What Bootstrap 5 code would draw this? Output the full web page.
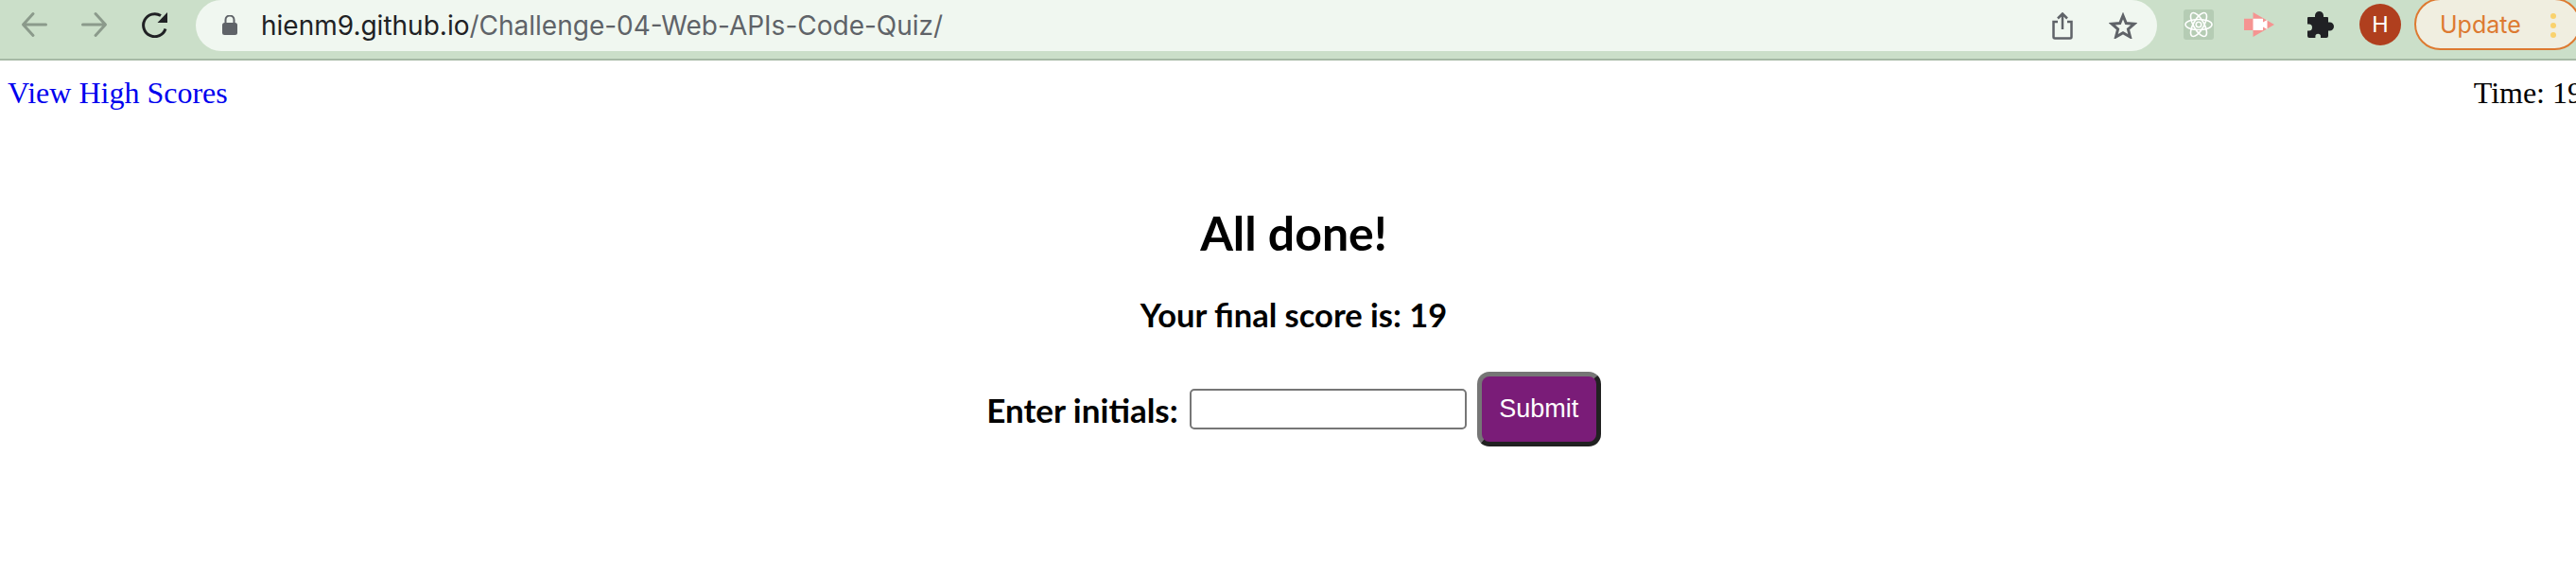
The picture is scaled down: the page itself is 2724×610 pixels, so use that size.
<!DOCTYPE html>
<html lang="en">
<head>
<meta charset="utf-8">
<title>Code Quiz</title>
<link href="https://cdn.jsdelivr.net/npm/bootstrap@5.3.0/dist/css/bootstrap.min.css" rel="stylesheet">
<style>
html,body{height:100%;overflow:hidden;background:#fff;color:#000}
.chrome-bar{height:64px;width:2724px;overflow:hidden;background:#cbdfc9;border-bottom:2px solid #a7baa6;padding-left:22px}
.chrome-bar>*{flex:none}
.nav-arrow{width:28px;height:28px;margin:12px 36px 0 0}
.nav-reload{width:30px;height:28px;margin:12px 28px 0 -1px}
.omni{width:2074px;height:54px;background:#f0f7f0;border-radius:27px;padding:0 21px 0 28px;font:28px/1 "Inter","Liberation Sans",sans-serif}
.omni-lock{margin-right:25px;margin-top:-1px}
.omni-host{color:#202124}.omni-path{color:#5f6368}
.omni-tools{margin-left:auto;gap:37px}
.ext-react{width:32px;height:32px;background:#b5ccb4;border-radius:3px;margin:10px 0 0 28px}
.ext-rec{width:32px;height:26px;margin:13px 0 0 32px}
.ext-puzzle{width:29px;height:28px;margin:12px 0 0 34px}
.avatar{width:44px;height:44px;margin:4px 0 0 27px;background:#b03f1e;color:#fff;font:24px/44px "Liberation Sans",sans-serif}
.update-pill{width:176px;height:55px;margin:-2px 0 0 14px;padding:2px 0 0 25px;background:#f0eee0;border:2px solid #dd7a31;border-radius:28px;color:#dd7a31;font:25px/1 "Inter","Liberation Sans",sans-serif;gap:31px}
.dots{gap:4px}.dots i{display:block;width:6px;height:6px;border-radius:50%;background:#f9d26e}
.page-wrap{width:2736px}
.top-row{font:32px/37px "Liberation Serif",serif;padding:16px 5px 0 8px}
.top-row a{color:#0000ee;text-decoration:none}
.quiz-main{padding-top:102px;font-family:"Lato","Liberation Sans",sans-serif;font-weight:700;color:#000}
.quiz-title{font-size:50px;line-height:54px;font-weight:700;margin:0 0 40px}
.quiz-score{font-size:34.500px;line-height:40px;margin:0 0 40px}
.quiz-form{gap:11px}
.quiz-label{font-size:35px;line-height:40px;margin-right:1px}
.quiz-input{width:293px;height:43px;border:2px solid #767676;border-radius:5px;padding:2px 4px;background:#fff}
.quiz-btn{width:131px;height:79px;background:#7a1c78;border:5px outset #767676;border-radius:13px;color:#fff;font:400 27px "Liberation Sans",sans-serif;padding:0}
</style>
</head>
<body>
<div class="chrome-bar d-flex align-items-start">
  <svg class="nav-arrow" viewBox="0 0 28 28" fill="none" stroke="#8b9a8b" stroke-width="3" stroke-linecap="round" stroke-linejoin="round"><path d="M26.500 14H3M13 2.500 2.500 14 13 25.500"/></svg>
  <svg class="nav-arrow" viewBox="0 0 28 28" fill="none" stroke="#8b9a8b" stroke-width="3" stroke-linecap="round" stroke-linejoin="round"><path d="M1.500 14H25M15 2.500 25.500 14 15 25.500"/></svg>
  <svg class="nav-reload" viewBox="0 0 30 28" fill="none"><path d="M26 18.500A12 12 0 1 1 21 4.500" stroke="#202124" stroke-width="3"/><path d="M28 1V12H17.500Z" fill="#202124"/></svg>
  <div class="omni d-flex align-items-center">
    <svg class="omni-lock" width="16" height="21" viewBox="0 0 16 21"><path d="M3.500 9V5a4.500 4.500 0 0 1 9 0v4" fill="none" stroke="#5f6368" stroke-width="2"/><rect y="8" width="16" height="13" rx="2.500" fill="#5f6368"/></svg>
    <span><span class="omni-host">hienm9.github.io</span><span class="omni-path">/Challenge-04-Web-APIs-Code-Quiz/</span></span>
    <div class="omni-tools d-flex align-items-center">
      <svg width="24" height="29" viewBox="0 0 24 29" fill="none" stroke="#5f6368" stroke-width="2.500"><path d="M7 10H2.500V26a1.500 1.500 0 0 0 1.500 1.500H20a1.500 1.500 0 0 0 1.500-1.500V10H17M12 18V2M7 6.500 12 1.500l5 5"/></svg>
      <svg width="30" height="28" viewBox="0 0 30 28" fill="none" stroke="#5f6368" stroke-width="3"><path d="M15 3.500 18.300 11.500 27 12.200 20.400 17.800 22.500 26 15 21.700 7.500 26 9.600 17.800 3 12.200 11.700 11.500Z"/></svg>
    </div>
  </div>
  <div class="ext-react d-flex align-items-center justify-content-center">
    <svg width="30" height="30" viewBox="0 0 30 30" fill="none" stroke="#fff" stroke-width="1.600"><ellipse cx="15" cy="15" rx="14" ry="5.500"/><ellipse cx="15" cy="15" rx="14" ry="5.500" transform="rotate(60 15 15)"/><ellipse cx="15" cy="15" rx="14" ry="5.500" transform="rotate(120 15 15)"/><circle cx="15" cy="15" r="2.800"/></svg>
  </div>
  <svg class="ext-rec" viewBox="0 0 32 26"><path d="M9.500 0 32 13 9.500 26V19H0V6.700H9.500Z" fill="#f59491"/><path d="M9.500 6.700H20V10.500L24.500 8V18L20 15.500V19H9.500Z" fill="#fff"/></svg>
  <svg class="ext-puzzle" viewBox="0 0 29 28"><path d="M1 7a1 1 0 0 1 1-1H9V4.500a4.500 4.500 0 0 1 9 0V6H22a1 1 0 0 1 1 1v4.500h1.500a4.500 4.500 0 0 1 0 9H23V26a2 2 0 0 1-2 2H15V26.500a2.800 2.800 0 0 0-5.600 0V28H3a2 2 0 0 1-2-2V20.500H2.500a3.500 3.500 0 0 0 0-7H1Z" fill="#202124"/></svg>
  <div class="avatar rounded-circle text-center">H</div>
  <div class="update-pill d-flex align-items-center">
    <span>Update</span>
    <span class="dots d-flex flex-column"><i></i><i></i><i></i></span>
  </div>
</div>
<div class="page-wrap">
  <div class="top-row d-flex justify-content-between">
    <a href="#">View High Scores</a>
    <span>Time: 19</span>
  </div>
  <main class="quiz-main text-center">
    <h1 class="quiz-title">All done!</h1>
    <p class="quiz-score">Your final score is: 19</p>
    <form class="quiz-form d-flex justify-content-center align-items-center">
      <label class="quiz-label" for="initials">Enter initials:</label>
      <input class="quiz-input" id="initials" type="text">
      <button class="quiz-btn" type="button">Submit</button>
    </form>
  </main>
</div>
<script src="https://cdn.jsdelivr.net/npm/bootstrap@5.3.0/dist/js/bootstrap.bundle.min.js"></script>
</body>
</html>
